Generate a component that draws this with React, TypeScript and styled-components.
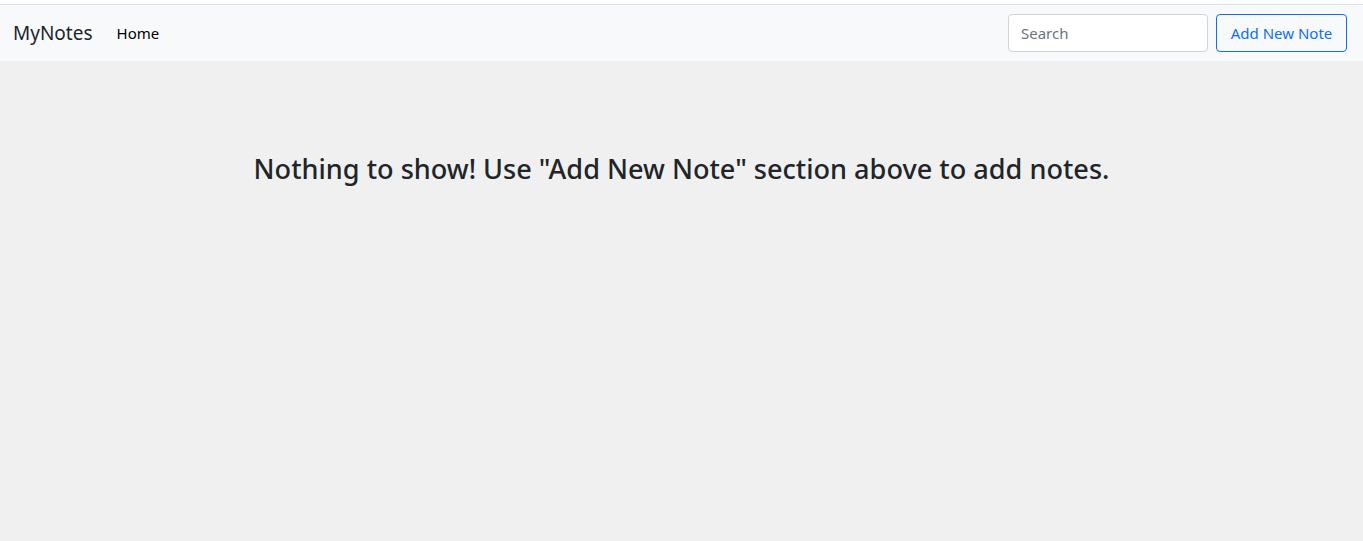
import styled, { createGlobalStyle } from "styled-components";

const GlobalStyle = createGlobalStyle`
  html, body {
    margin: 0;
    padding: 0;
    background-color: #f0f0f0;
    font-family: "Noto Sans", "Open Sans", sans-serif;
    color: #212529;
  }
  body {
    border-top: 4px solid #ffffff;
    min-height: 537px;
  }
`;

const Navbar = styled.nav`
  display: flex;
  align-items: center;
  justify-content: space-between;
  height: 56px;
  padding: 0 16px 0 13px;
  background-color: #f8f9fa;
  border-top: 1px solid #dee2e6;
`;

const Left = styled.div`
  display: flex;
  align-items: center;
`;

const Brand = styled.a`
  font-size: 19px;
  color: #212529;
  text-decoration: none;
  margin-right: 24px;
`;

const NavLink = styled.a`
  font-size: 15px;
  color: #000000;
  text-decoration: none;
`;

const Form = styled.form`
  display: flex;
  align-items: center;
  gap: 8px;
`;

const SearchInput = styled.input`
  box-sizing: border-box;
  width: 200px;
  height: 38px;
  padding: 6px 12px;
  font-family: inherit;
  font-size: 15px;
  color: #212529;
  background: #ffffff;
  border: 1px solid #ced4da;
  border-radius: 4px;
  outline: none;
  &::placeholder {
    color: #6c757d;
  }
`;

const OutlineButton = styled.button`
  box-sizing: border-box;
  height: 38px;
  width: 131px;
  padding: 0 12px;
  font-family: inherit;
  font-size: 15px;
  color: #0d6efd;
  background: transparent;
  border: 1px solid #0d6efd;
  border-radius: 4px;
  cursor: pointer;
`;

const Main = styled.main`
  display: flex;
  justify-content: center;
  padding-top: 92px;
`;

const Empty = styled.h2`
  margin: 0;
  font-size: 27.1px;
  font-weight: 500;
  line-height: 1.2;
  color: #212529;
`;

export default function App() {
  return (
    <>
      <GlobalStyle />
      <Navbar>
        <Left>
          <Brand href="#">MyNotes</Brand>
          <NavLink href="#">Home</NavLink>
        </Left>
        <Form onSubmit={(e) => e.preventDefault()}>
          <SearchInput type="search" placeholder="Search" />
          <OutlineButton type="button">Add New Note</OutlineButton>
        </Form>
      </Navbar>
      <Main>
        <Empty>Nothing to show! Use "Add New Note" section above to add notes.</Empty>
      </Main>
    </>
  );
}
